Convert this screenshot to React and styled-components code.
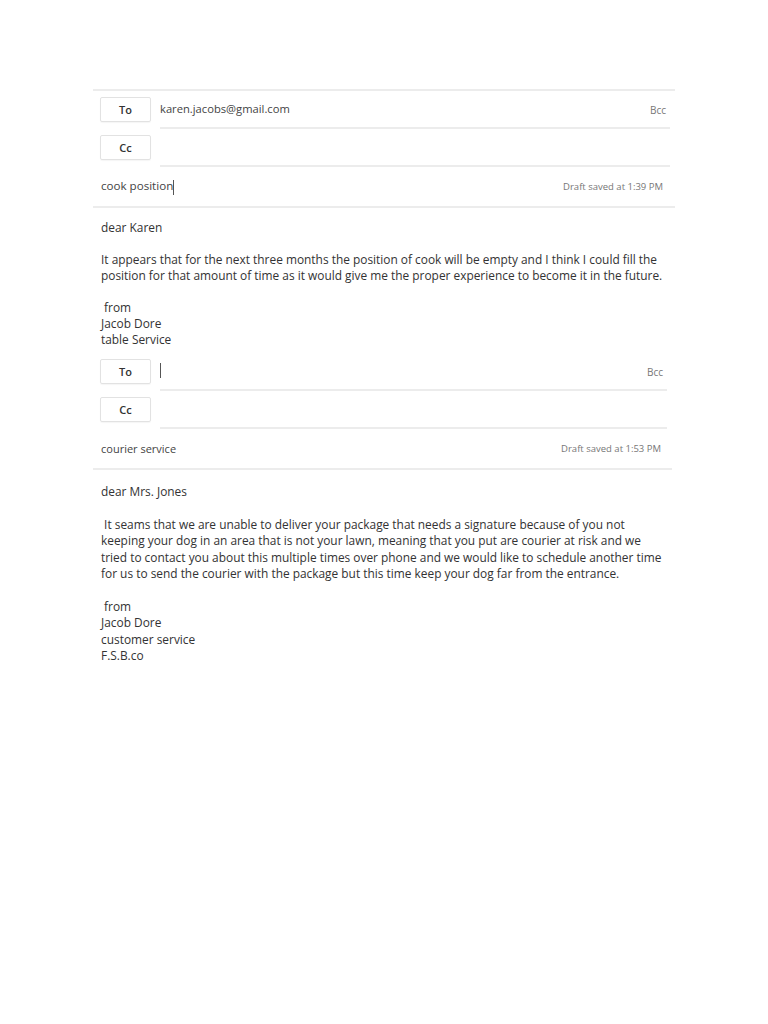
import React from 'react'
import styled, { createGlobalStyle } from 'styled-components'

const GlobalStyle = createGlobalStyle`
    body {
        margin: 0;
        background: #ffffff;
        font-family: "Open Sans", "Noto Sans", sans-serif;
        color: #333333;
    }
`

const Page = styled.div`
    padding: 89px 0 0 93px;
`

const Compose = styled.div`
    width: ${p => p.width}px;
    border-top: ${p => p.topLine ? '2px solid #ececec' : 'none'};
`

const Row = styled.div`
    display: flex;
    align-items: stretch;
    height: 38px;
`

const Label = styled.div`
    width: 49px;
    height: 23px;
    margin: 6px 0 7px 7px;
    border: 1px solid #e2e2e2;
    border-radius: 2px;
    box-shadow: 0 1px 1px rgba(0, 0, 0, 0.04);
    display: flex;
    align-items: center;
    justify-content: center;
    font-size: 11px;
    font-weight: 600;
    color: #333;
`

const Field = styled.div`
    flex: 1;
    margin: 0 5px 0 9px;
    border-bottom: 2px solid #ececec;
    display: flex;
    align-items: center;
    justify-content: space-between;
    padding-bottom: 2px;
    font-size: 11.2px;
    color: #444;
`

const Bcc = styled.span`
    font-size: 10px;
    color: #777;
    margin-right: 4px;
    margin-top: 3px;
`

const Cursor = styled.span`
    display: inline-block;
    width: 1px;
    height: 15px;
    background: #555;
    vertical-align: middle;
`

const Subject = styled.div`
    height: 39px;
    border-bottom: 2px solid #ececec;
    display: flex;
    align-items: center;
    justify-content: space-between;
    padding: 0 ${p => p.right}px 0 8px;
    font-size: ${p => p.size}px;
    color: #444;
`

const Draft = styled.span`
    font-size: 9.5px;
    color: #777;
`

const Body = styled.div`
    padding: ${p => p.top}px 0 6px 8px;
    font-size: 11.9px;
    line-height: ${p => p.lh}px;
    white-space: pre;
    color: #333;
`

const Head = ({ to, toCursor, draft, subject, subjectCursor, right, size }) => (
    <>
        <Row>
            <Label>To</Label>
            <Field>
                <span>{toCursor ? <Cursor /> : to}</span>
                <Bcc>Bcc</Bcc>
            </Field>
        </Row>
        <Row>
            <Label>Cc</Label>
            <Field />
        </Row>
        <Subject right={right} size={size}>
            <span>{subject}{subjectCursor && <Cursor />}</span>
            <Draft>{draft}</Draft>
        </Subject>
    </>
)

const App = () => {
    return (
        <Page>
            <GlobalStyle />
            <Compose width={582} topLine>
                <Head to="karen.jacobs@gmail.com" subject="cook position" subjectCursor
                    draft="Draft saved at 1:39 PM" right={12} size={11.6} />
                <Body top={11} lh={16}>
{`dear Karen

It appears that for the next three months the position of cook will be empty and I think I could fill the
position for that amount of time as it would give me the proper experience to become it in the future.

 from
Jacob Dore
table Service`}
                </Body>
            </Compose>
            <Compose width={579}>
                <Head toCursor subject="courier service"
                    draft="Draft saved at 1:53 PM" right={11} size={11} />
                <Body top={13} lh={16.4}>
{`dear Mrs. Jones

 It seams that we are unable to deliver your package that needs a signature because of you not
keeping your dog in an area that is not your lawn, meaning that you put are courier at risk and we
tried to contact you about this multiple times over phone and we would like to schedule another time
for us to send the courier with the package but this time keep your dog far from the entrance.

 from
Jacob Dore
customer service
F.S.B.co`}
                </Body>
            </Compose>
        </Page>
    )
}

export default App
